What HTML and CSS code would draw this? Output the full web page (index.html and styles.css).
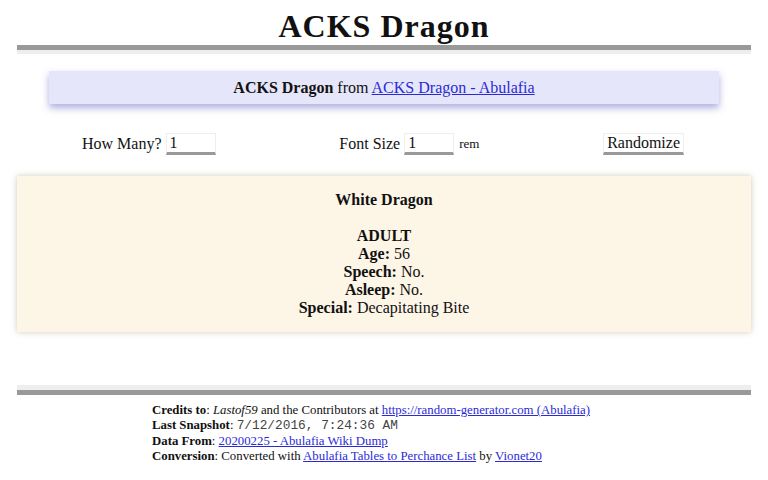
FILE: index.html
```html
<!DOCTYPE html>
<html>
<head>
<meta charset="utf-8">
<link rel="stylesheet" href="styles.css">
</head>
<body>
<div class="page">
  <h1 class="title">ACKS Dragon</h1>
  <div class="rule rule-top"></div>
  <div class="info"><b>ACKS Dragon</b> from <a href="#">ACKS Dragon - Abulafia</a></div>
  <div class="controls">
    <label class="ctl">How Many? <span class="field">1</span></label>
    <label class="ctl">Font Size <span class="field">1</span> <small class="unit">rem</small></label>
    <span class="button">Randomize</span>
  </div>
  <div class="output">
    <b>White Dragon</b><br><br>
    <b>ADULT</b><br>
    <b>Age:</b> 56<br>
    <b>Speech:</b> No.<br>
    <b>Asleep:</b> No.<br>
    <b>Special:</b> Decapitating Bite
  </div>
  <div class="rule rule-bottom"></div>
  <div class="footer">
    <div><b>Credits to</b>: <i>Lastof59</i> and the Contributors at <a href="#">https://random-generator.com (Abulafia)</a></div>
    <div><b>Last Snapshot</b>: <span class="mono">7/12/2016, 7:24:36 AM</span></div>
    <div><b>Data From</b>: <a href="#">20200225 - Abulafia Wiki Dump</a></div>
    <div><b>Conversion</b>: Converted with <a href="#">Abulafia Tables to Perchance List</a> by <a href="#">Vionet20</a></div>
  </div>
</div>
</body>
</html>
```
FILE: styles.css
```css
html, body {
  margin: 0;
  padding: 0;
  background: #fff;
}
body {
  font-family: "Liberation Serif", "Times New Roman", serif;
  font-size: 16px;
  color: #111;
}
a { color: #2b2bd6; }
.page {
  padding: 8px 17px 0;
}
.title {
  margin: 0;
  font-size: 32px;
  font-weight: bold;
  text-align: center;
  letter-spacing: 1px;
  line-height: 37px;
}
.rule-top {
  height: 0;
  border-top: 5px solid #999;
  border-bottom: 4px solid #eee;
}
.rule-bottom {
  height: 0;
  border-top: 5px solid #eee;
  border-bottom: 5px solid #999;
  margin-top: 53px;
}
.info {
  margin: 17px 32px 0;
  background: #e6e6fa;
  text-align: center;
  height: 33px;
  line-height: 33px;
  box-shadow: 0 4px 7px rgba(110, 110, 200, 0.55);
}
.controls {
  display: flex;
  justify-content: space-between;
  align-items: center;
  padding: 0 67px 0 65px;
  margin-top: 25px;
  height: 30px;
}
.ctl { display: flex; align-items: center; gap: 4px; }
.field {
  display: inline-block;
  width: 42px;
  height: 18px;
  line-height: 18px;
  padding: 0 3px;
  border: 1px solid #eee;
  border-bottom: 3px solid #999;
  text-align: left;
  background: #fff;
}
.unit { font-size: 13px; margin-left: 1px; }
.button {
  display: inline-block;
  padding: 0 3px;
  height: 18px;
  line-height: 18px;
  border: 1px solid #eee;
  border-bottom: 3px solid #999;
  background: #fff;
}
.output {
  margin-top: 17px;
  background: #fdf5e6;
  text-align: center;
  line-height: 18px;
  padding: 15px 0 15px;
  box-shadow: 0 0 6px rgba(120, 100, 70, 0.35);
}
.footer {
  width: 464px;
  margin: 8px auto 0;
  font-size: 12.8px;
  line-height: 15.3px;
}
.mono {
  font-family: "Liberation Mono", "Courier New", monospace;
  font-size: 12.8px;
  color: #444;
}
```
